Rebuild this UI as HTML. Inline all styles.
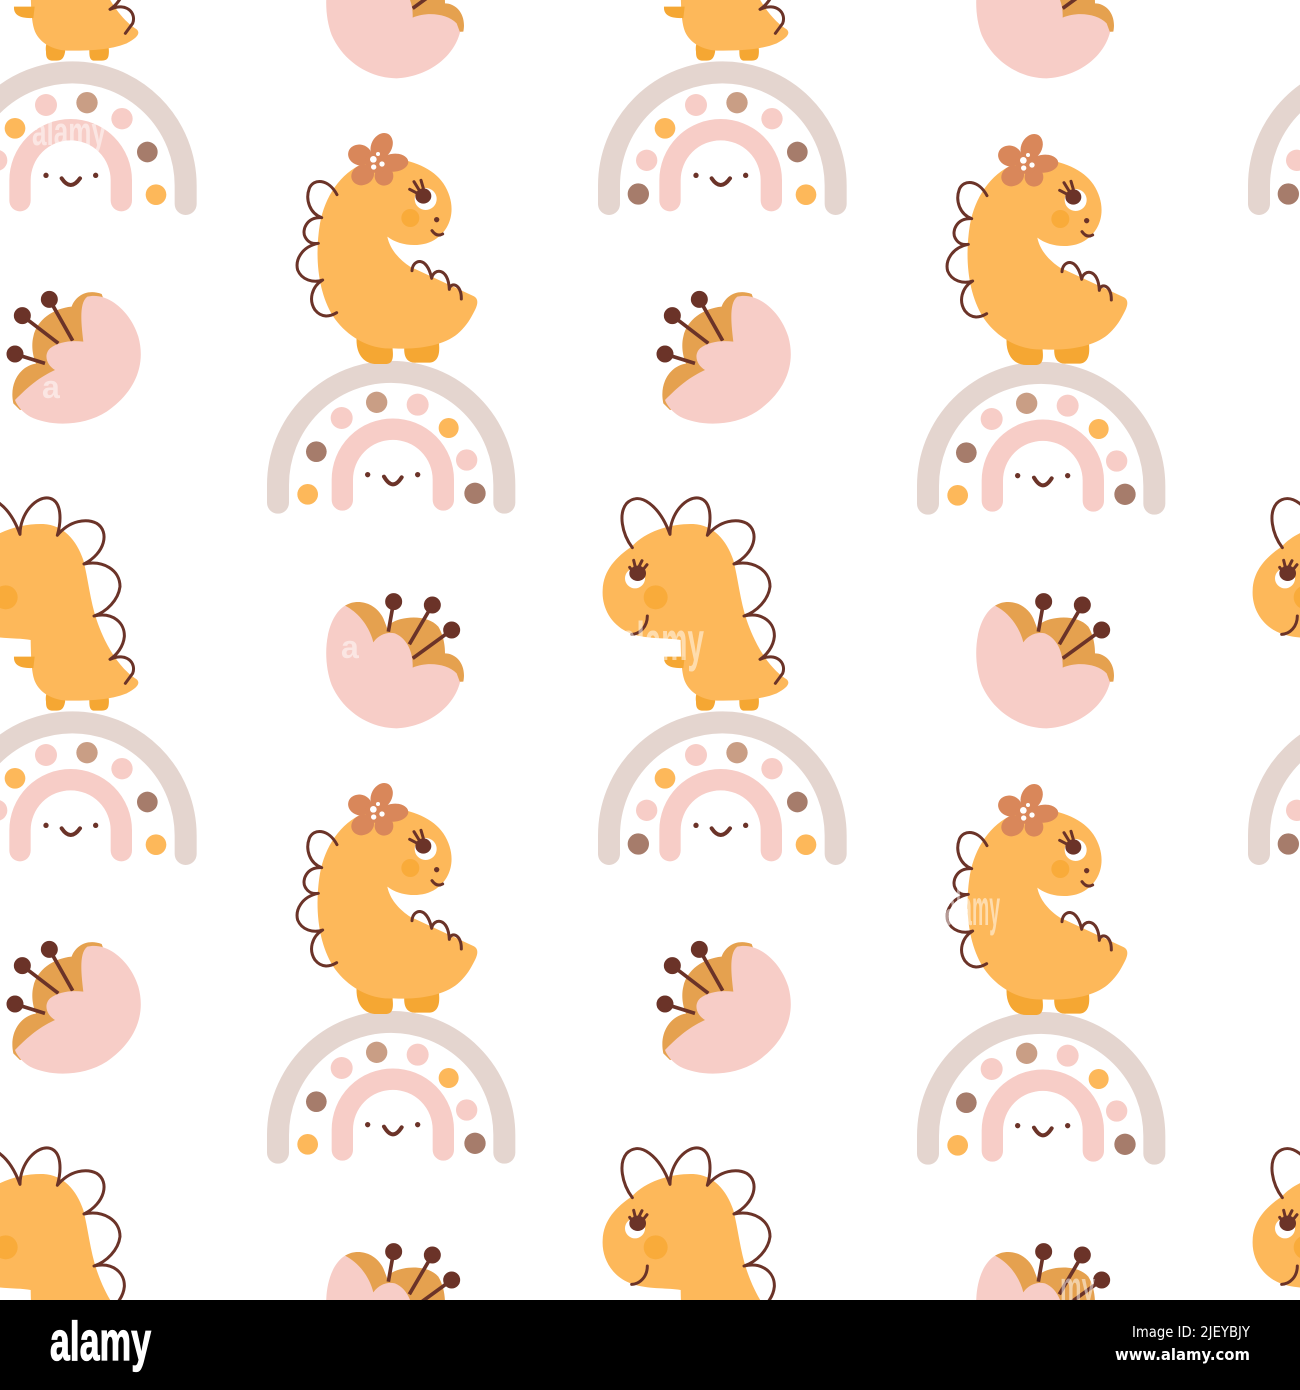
<!DOCTYPE html>
<html><head><meta charset="utf-8"><title>Dino pattern</title>
<style>html,body{margin:0;padding:0;background:#fff;width:1300px;height:1390px;overflow:hidden}svg{display:block}</style></head>
<body>
<svg xmlns="http://www.w3.org/2000/svg" width="1300" height="1390" viewBox="0 0 1300 1390">
<defs>
<g id="A" transform="translate(260,120) scale(.33333)">
  <g fill="none" stroke-linecap="round">
  <path d="M54 1148V1095A339.5 339.5 0 0 1 733 1095V1148" stroke="#e4d5cf" stroke-width="66"/>
  <path d="M247 1140V1079A151.5 151.5 0 0 1 550 1079V1140" stroke="#f7cdc7" stroke-width="64"/>
  <path d="M372 1070Q398 1115 425 1072" stroke="#6b3328" stroke-width="12"/>
  </g>
  <g fill="#f7cdc7"><circle cx="473" cy="854" r="33"/><circle cx="245" cy="894" r="33"/><circle cx="620" cy="1020" r="32"/></g>
  <g fill="#fdb85a"><circle cx="566" cy="924" r="30"/><circle cx="143" cy="1123" r="31"/></g>
  <circle cx="350" cy="847" r="32" fill="#c99e85"/>
  <g fill="#a67c6b"><circle cx="169" cy="995" r="31"/><circle cx="645" cy="1120" r="32"/></g>
  <g fill="#6b3328"><circle cx="323" cy="1064" r="8"/><circle cx="473" cy="1064" r="8"/></g>
  <g fill="#f5a733">
  <path d="M290 650C286 700 310 732 350 732H380C402 730 400 705 397 680Z"/>
  <path d="M433 680C430 715 445 730 470 728H510C535 725 540 700 537 670Z"/>
  </g>
  <path fill="#fdb85a" d="M310 130C400 95 510 130 550 190C590 250 580 320 530 355C490 385 420 380 382 350C390 390 420 420 450 440L640 528C655 535 655 550 645 570C630 600 620 615 600 635C560 675 480 690 400 685C330 690 260 650 220 590C170 510 165 400 180 310C195 230 240 160 310 130Z"/>
  <circle cx="451" cy="294" r="27" fill="#f9ab3a"/>
  <circle cx="530" cy="299" r="8" fill="#6b3328"/>
  <circle cx="497" cy="237" r="33" fill="#fff"/>
  <ellipse cx="490" cy="228" rx="24" ry="23" fill="#6b3328"/>
  <g fill="none" stroke="#6b3328" stroke-width="9" stroke-linecap="round" stroke-linejoin="round">
  <path d="M472 220L449 208M476 208L462 185M490 205L483 181"/>
  <path d="M516 332Q530 352 548 342"/>
  <path d="M231 224C205 175 160 175 148 205C135 240 150 280 185 293C140 290 125 330 135 350C145 370 160 372 175 370C125 380 105 420 113 450C125 480 160 490 188 480C155 500 145 540 165 570C185 595 210 590 230 578"/>
  <path d="M456 452C458 418 500 405 515 475C520 445 565 440 568 508C570 485 605 490 604 537"/>
  </g>
  <g fill="#d9875a">
  <ellipse cx="365" cy="78" rx="31" ry="41" transform="rotate(28 365 78)"/>
  <ellipse cx="300" cy="105" rx="36" ry="31" transform="rotate(15 300 105)"/>
  <ellipse cx="402" cy="128" rx="43" ry="27" transform="rotate(-5 402 128)"/>
  <ellipse cx="308" cy="165" rx="35" ry="30" transform="rotate(-25 308 165)"/>
  <ellipse cx="372" cy="168" rx="28" ry="29"/>
  <circle cx="350" cy="125" r="34"/>
  </g>
  <g fill="#fff"><circle cx="340" cy="118" r="10"/><circle cx="366" cy="132" r="8"/><circle cx="341" cy="141" r="8"/><circle cx="354" cy="102" r="6"/></g>
</g>
<g id="R" transform="translate(590,480) scale(.33333)">
  <g fill="none" stroke-linecap="round">
  <path d="M57 1122V1067A340 340 0 0 1 737 1067V1122" stroke="#e4d5cf" stroke-width="66"/>
  <path d="M240 1112V1051A152 152 0 0 1 544 1051V1112" stroke="#f7cdc7" stroke-width="64"/>
  <path d="M365 1045Q392 1085 420 1045" stroke="#6b3328" stroke-width="12"/>
  </g>
  <g fill="#f7cdc7"><circle cx="318" cy="825" r="33"/><circle cx="546" cy="866" r="32"/><circle cx="170" cy="991" r="32"/></g>
  <circle cx="441" cy="818" r="32" fill="#c99e85"/>
  <g fill="#fdb85a"><circle cx="225" cy="895" r="31"/><circle cx="648" cy="1094" r="31"/></g>
  <g fill="#a67c6b"><circle cx="622" cy="966" r="31"/><circle cx="145" cy="1092" r="32"/></g>
  <g fill="#6b3328"><circle cx="318" cy="1036" r="8"/><circle cx="467" cy="1036" r="8"/></g>
</g>
<g id="B" transform="translate(590,480) scale(.33333)">
  <path fill="#f5a733" d="M330 628L370 650C378 656 376 665 373 675C368 690 360 692 345 692H335C320 690 318 680 318 665C316 650 318 635 330 628Z"/>
  <path fill="#f5a733" d="M455 642H500C508 645 508 670 505 680C502 690 495 692 480 692H460C450 690 448 680 448 665C448 650 448 645 455 642Z"/>
  <path fill="#fdb85a" d="M125 200C170 150 250 130 310 132C370 135 410 180 430 240C445 300 450 360 470 420C490 480 530 560 590 598C603 610 590 625 560 640C510 660 450 662 380 662C340 660 300 640 285 605C275 580 273 540 272 480C230 472 160 480 110 455C60 430 35 380 38 330C40 270 80 230 125 200Z"/>
  <path fill="#f5a733" d="M222 530C220 555 240 566 280 564L284 530Z"/>
  <circle cx="197" cy="352" r="36" fill="#f9ab3a"/>
  <circle cx="135" cy="295" r="30" fill="#fff"/>
  <ellipse cx="143" cy="280" rx="25" ry="23" fill="#6b3328"/>
  <g fill="none" stroke="#6b3328" stroke-width="9" stroke-linecap="round" stroke-linejoin="round">
  <path d="M136 262L131 241M148 258L156 242M160 268L171 254M125 270L119 262"/>
  <path d="M172 408C172 440 150 462 125 463"/>
  <path d="M127 203C95 160 85 100 110 70C150 30 210 80 240 163C240 100 290 45 330 55C365 65 365 120 352 166C390 120 440 115 470 130C510 155 495 220 432 252C490 240 540 270 540 320C535 360 500 395 462 408C520 395 555 430 553 470C550 500 530 525 510 538C560 515 590 550 578 580L556 610"/>
  </g>
</g>
<g id="C" transform="translate(0,280) scale(.33333)">
  <path fill="#e5a14f" d="M40 370C25 300 70 255 108 251C95 220 95 190 100 170C110 120 160 85 215 80C225 50 260 25 305 42L400 300L60 390Z"/>
  <g stroke="#6b3328" stroke-width="11" fill="#6b3328">
  <path d="M175 190L67 107M218 182L148 58M135 250L45 222"/>
  <circle cx="67" cy="107" r="20"/><circle cx="148" cy="58" r="20"/><circle cx="45" cy="222" r="20"/>
  </g>
  <path fill="#f7cdc7" d="M262 50C320 35 390 90 415 170C440 260 400 340 320 395C250 440 150 440 90 410C65 395 50 375 45 360C75 330 110 295 165 270C140 255 130 225 150 205C175 185 215 180 250 185C245 140 235 70 262 50Z"/>
</g>
<g id="D" transform="translate(320,585) scale(.33333)">
  <path fill="#e5a14f" d="M75 62C110 40 165 50 190 100C198 120 202 130 204 140L213 115C240 95 320 85 355 125C370 150 375 180 375 205C410 205 440 240 430 290L200 300Z"/>
  <g stroke="#6b3328" stroke-width="11" fill="#6b3328">
  <path d="M205 140L221 50M268 178L337 60M278 220L395 135"/>
  <circle cx="221" cy="50" r="20"/><circle cx="337" cy="60" r="20"/><circle cx="395" cy="135" r="20"/>
  </g>
  <path fill="#f7cdc7" d="M75 62C120 85 150 130 160 172C175 150 200 140 225 145C260 160 280 200 278 248C320 230 380 235 410 265L420 292C400 370 320 425 230 430C150 430 70 380 35 300C5 220 15 100 75 62Z"/>
</g>
</defs>
<rect width="1300" height="1390" fill="#fff"/>
<svg x="0" y="0" width="1300" height="1300" viewBox="0 0 1300 1300" overflow="hidden">
<use href="#A"/><use href="#A" x="650" y="1"/><use href="#A" y="650"/><use href="#A" x="650" y="651"/>
<use href="#R" x="-650" y="-650"/><use href="#R" y="-650"/><use href="#R" x="650" y="-650"/>
<use href="#R" x="-650"/><use href="#R"/><use href="#R" x="650"/>
<use href="#B" x="-650" y="-650"/><use href="#B" y="-650"/><use href="#B" x="650" y="-650"/>
<use href="#B" x="-650"/><use href="#B"/><use href="#B" x="650"/>
<use href="#B" x="-650" y="650"/><use href="#B" y="650"/><use href="#B" x="650" y="650"/>
<use href="#C"/><use href="#C" x="650"/><use href="#C" y="650"/><use href="#C" x="650" y="650"/>
<use href="#D" y="-650"/><use href="#D" x="650" y="-650"/><use href="#D"/><use href="#D" x="650"/><use href="#D" y="650"/><use href="#D" x="650" y="650"/>
<g font-family="'Liberation Sans',sans-serif" font-weight="700" fill="#fff" fill-opacity=".5">
  <text x="32" y="145" font-size="40" textLength="74" lengthAdjust="spacingAndGlyphs">alamy</text>
  <text x="620" y="660" font-size="55" textLength="84" lengthAdjust="spacingAndGlyphs">alamy</text>
  <text x="945" y="925" font-size="50" textLength="55" lengthAdjust="spacingAndGlyphs">alamy</text>
  <text x="42" y="398" font-size="32">a</text>
  <text x="341" y="658" font-size="32">a</text>
  <text x="1060" y="1300" font-size="40" textLength="35" lengthAdjust="spacingAndGlyphs">my</text>
</g>
</svg>
<rect y="1300" width="1300" height="90" fill="#000"/>
<text x="50" y="1360" font-family="'Liberation Sans',sans-serif" font-size="55" font-weight="700" fill="#fff" stroke="#fff" stroke-width="1.2" textLength="101" lengthAdjust="spacingAndGlyphs">alamy</text>
<text x="1132" y="1337" font-family="'DejaVu Sans',sans-serif" font-size="15" fill="#fff" textLength="118" lengthAdjust="spacingAndGlyphs">Image ID: 2JEYBJY</text>
<text x="1115" y="1360" font-family="'DejaVu Sans',sans-serif" font-size="16" font-weight="700" fill="#fff" textLength="135" lengthAdjust="spacingAndGlyphs">www.alamy.com</text>
</svg>
</body></html>
